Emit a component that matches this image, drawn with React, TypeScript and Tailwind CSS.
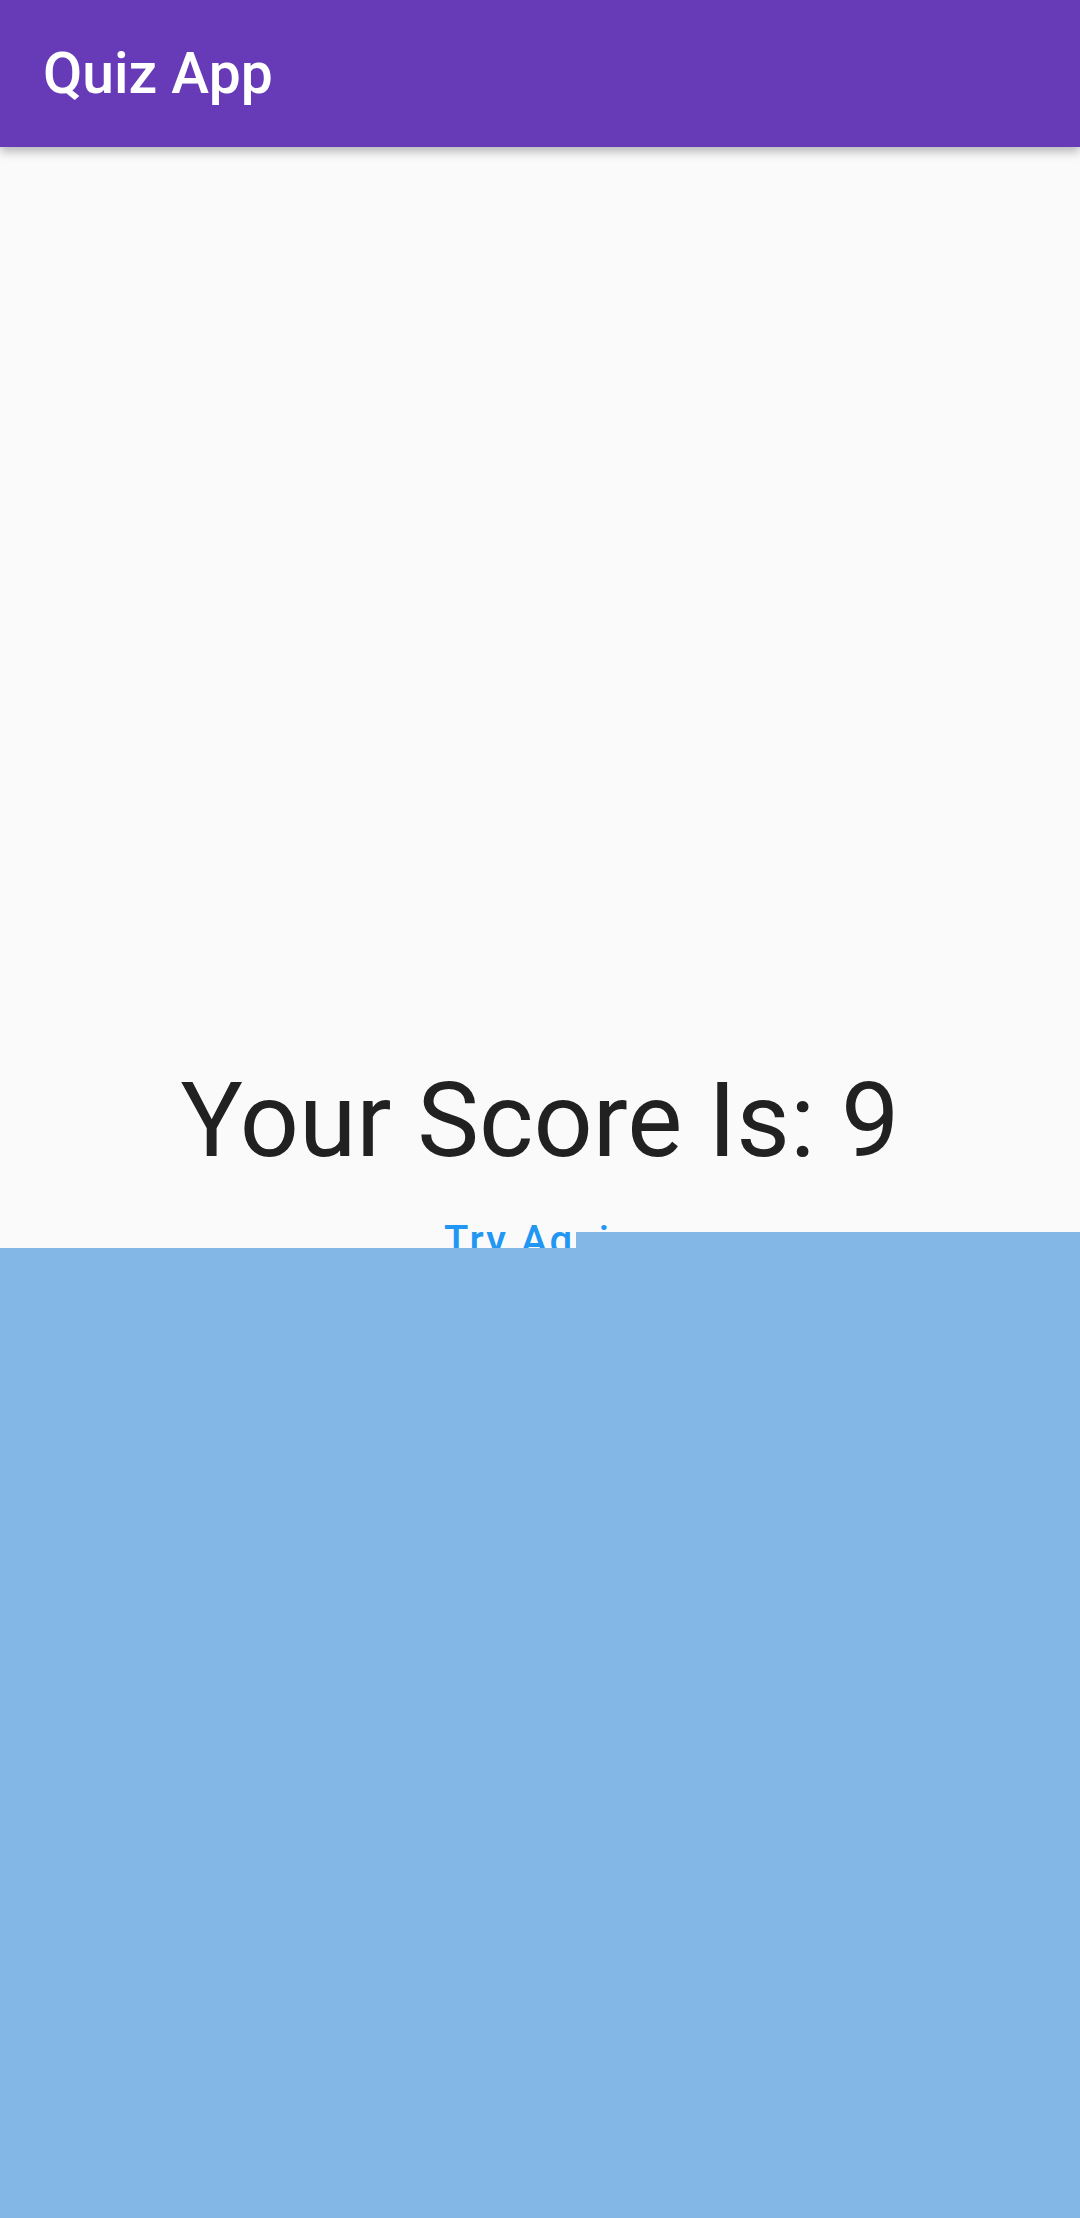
export default function App() {
  return (
    <div
      className="relative w-[1080px] h-[2218px] overflow-hidden bg-[#fafafa]"
      style={{ fontFamily: 'Roboto, "Liberation Sans", sans-serif' }}
    >
      {/* App bar */}
      <header className="relative z-10 flex h-[147px] items-center bg-[#673ab7] pl-[43px] shadow-[0_4px_10px_rgba(0,0,0,0.3)]">
        <h1 className="text-[57px] font-medium leading-none text-white">Quiz App</h1>
      </header>

      {/* Result */}
      <main className="flex flex-col items-center pt-[922px]">
        <p className="text-[104px] leading-none text-[#212121]">Your Score Is: 9</p>
        <button className="mt-[48px] text-[40px] font-medium leading-none tracking-[0.06em] text-[#2196f3]">
          Try Again
        </button>
      </main>

      {/* Overlay covering the lower part */}
      <div className="absolute left-0 right-0 top-[1248px] bottom-0 bg-[#83b8e6]" />
      <div className="absolute left-[576px] right-0 top-[1232px] h-[16px] bg-[#83b8e6]" />
    </div>
  );
}
